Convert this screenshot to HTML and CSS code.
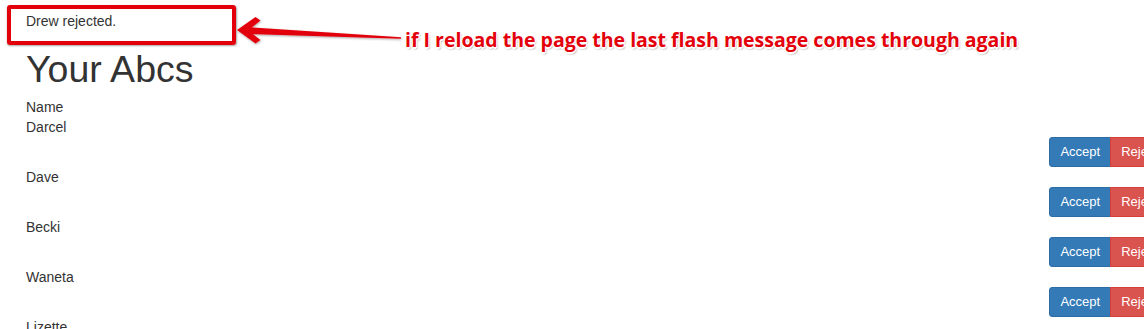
FILE: index.html
```html
<!DOCTYPE html>
<html>
<head>
<meta charset="utf-8">
<link rel="stylesheet" href="styles.css">
</head>
<body>
<div class="page">
  <div class="flash">Drew rejected.</div>
  <h1 class="title">Your Abcs</h1>
  <div class="list">
    <div class="head">Name</div>
    <div class="item">
      <div class="name">Darcel</div>
      <div class="actions"><button class="btn btn-accept">Accept</button><button class="btn btn-reject">Reject</button></div>
    </div>
    <div class="item">
      <div class="name">Dave</div>
      <div class="actions"><button class="btn btn-accept">Accept</button><button class="btn btn-reject">Reject</button></div>
    </div>
    <div class="item">
      <div class="name">Becki</div>
      <div class="actions"><button class="btn btn-accept">Accept</button><button class="btn btn-reject">Reject</button></div>
    </div>
    <div class="item">
      <div class="name">Waneta</div>
      <div class="actions"><button class="btn btn-accept">Accept</button><button class="btn btn-reject">Reject</button></div>
    </div>
    <div class="item">
      <div class="name">Lizette</div>
      <div class="actions"><button class="btn btn-accept">Accept</button><button class="btn btn-reject">Reject</button></div>
    </div>
  </div>
</div>

<div class="callout-box"></div>
<svg class="callout-arrow" width="420" height="60" viewBox="0 0 420 60">
  <defs>
    <filter id="sh" x="-10%" y="-50%" width="120%" height="200%">
      <feDropShadow dx="0.5" dy="1" stdDeviation="0.8" flood-color="#000" flood-opacity="0.35"/>
    </filter>
  </defs>
  <g filter="url(#sh)" fill="#e3000b">
    <polygon points="246,27 401,37.2 401,38.8 246,34"/>
    <polygon points="237,30 255.5,17 260.5,20.5 248,30.5 260.5,40 255.5,43.5"/>
  </g>
</svg>
<div class="callout-text">if I reload the page the last flash message comes through again</div>
</body>
</html>
```
FILE: styles.css
```css
html, body {
  margin: 0;
  padding: 0;
  overflow: hidden;
  background: #fff;
}
body {
  font-family: "Liberation Sans", Arial, Helvetica, sans-serif;
  font-size: 14px;
  line-height: 20px;
  color: #333;
  position: relative;
  height: 329px;
}
.page {
  padding: 11px 0 0 26px;
}
.flash {
  height: 20px;
}
.title {
  margin: 18px 0 8px 0;
  font-size: 37.5px;
  line-height: 40px;
  font-weight: 500;
  color: #333;
}
.head, .name {
  height: 20px;
}
.actions {
  display: flex;
  justify-content: flex-end;
  margin-right: -25px;
}
.btn {
  font-family: "Liberation Sans", Arial, Helvetica, sans-serif;
  font-size: 13px;
  line-height: 18px;
  padding: 5px 10px;
  border: 1px solid transparent;
  color: #fff;
  margin: 0;
  cursor: pointer;
}
.btn-accept {
  background: #337ab7;
  border-color: #2e6da4;
  border-radius: 3px 0 0 3px;
}
.btn-reject {
  background: #d9534f;
  border-color: #d43f3a;
  border-radius: 0 3px 3px 0;
  margin-left: -1px;
}
.callout-box {
  position: absolute;
  left: 7px;
  top: 5px;
  width: 221px;
  height: 32px;
  border: 4px solid #e3000b;
  border-radius: 3px;
  box-shadow: 0.5px 1px 2px rgba(0,0,0,0.35);
}
.callout-arrow {
  position: absolute;
  left: 0;
  top: 0;
}
.callout-text {
  position: absolute;
  left: 405px;
  top: 26.5px;
  font-family: "Open Sans", "DejaVu Sans", sans-serif;
  font-weight: 700;
  font-size: 19.5px;
  line-height: 26px;
  color: #e3000b;
  white-space: nowrap;
  text-shadow: -1px -1px 0 #fff, 1px -1px 0 #fff, -1px 1px 0 #fff, 1px 1px 0 #fff, 0 -1.5px 0 #fff, 0 1.5px 0 #fff, 1px 2px 2px rgba(0,0,0,0.45);
}
```
